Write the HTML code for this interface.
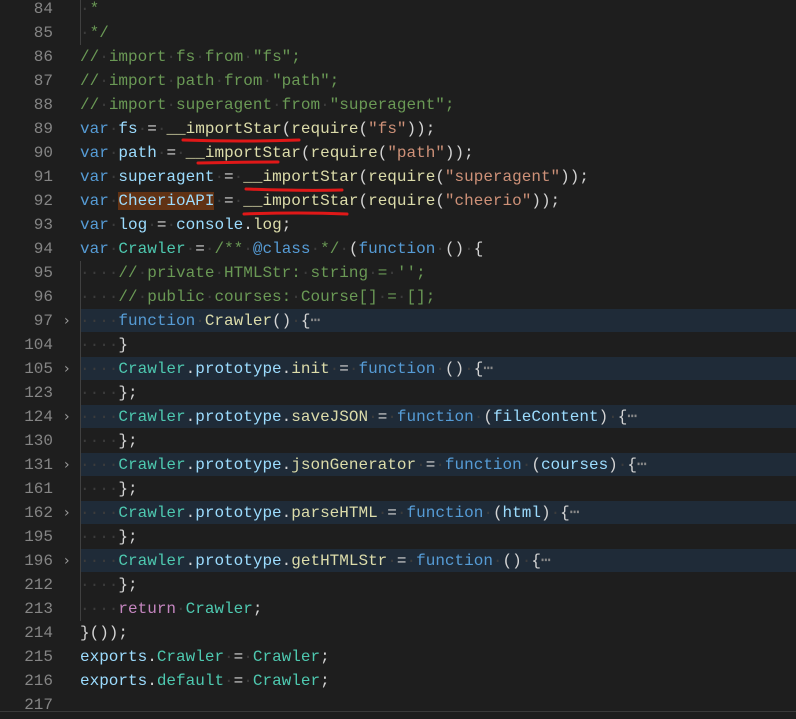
<!DOCTYPE html>
<html><head><meta charset="utf-8"><style>
html,body{margin:0;padding:0;background:#1e1e1e;width:796px;height:719px;overflow:hidden}
#ed{position:absolute;left:0;top:-3px;width:796px;font-family:"Liberation Mono","DejaVu Sans Mono",monospace;font-size:16px;color:#d4d4d4}
.l{position:relative;height:24px;line-height:24px;white-space:pre}
.n{position:absolute;left:0;width:53px;text-align:right;color:#858585}
.x{position:absolute;left:80px}
.h{position:absolute;left:80px;right:0;top:0;height:23px;background:#1f2b38}
.ch{position:absolute;left:64px;top:0;color:#9a9a9a;font-size:14px;font-family:"DejaVu Sans",sans-serif}
.k{color:#569cd6}.v{color:#9cdcfe}.f{color:#dcdcaa}.s{color:#ce9178}.c{color:#6a9955}.t{color:#4ec9b0}.r{color:#c586c0}.d{color:#3c3c3c}.g{color:#8a8a8a}
.hl{background:#613214}
.gd{position:absolute;top:0;width:1px;height:24px;background:#404040}
#bl{position:absolute;left:0;top:711px;width:796px;height:1px;background:#3a3a3a}
</style></head><body>
<div id="ed">
<div class="l"><span class="n">84</span><span class="gd" style="left:80px"></span><span class="x"><span class="d">·</span><span class="c">*</span></span></div>
<div class="l"><span class="n">85</span><span class="gd" style="left:80px"></span><span class="x"><span class="d">·</span><span class="c">*/</span></span></div>
<div class="l"><span class="n">86</span><span class="x c">//<span class="d">·</span>import<span class="d">·</span>fs<span class="d">·</span>from<span class="d">·</span>"fs";</span></div>
<div class="l"><span class="n">87</span><span class="x c">//<span class="d">·</span>import<span class="d">·</span>path<span class="d">·</span>from<span class="d">·</span>"path";</span></div>
<div class="l"><span class="n">88</span><span class="x c">//<span class="d">·</span>import<span class="d">·</span>superagent<span class="d">·</span>from<span class="d">·</span>"superagent";</span></div>
<div class="l"><span class="n">89</span><span class="x"><span class="k">var</span><span class="d">·</span><span class="v">fs</span><span class="d">·</span>=<span class="d">·</span><span class="f">__importStar</span>(<span class="f">require</span>(<span class="s">"fs"</span>));</span></div>
<div class="l"><span class="n">90</span><span class="x"><span class="k">var</span><span class="d">·</span><span class="v">path</span><span class="d">·</span>=<span class="d">·</span><span class="f">__importStar</span>(<span class="f">require</span>(<span class="s">"path"</span>));</span></div>
<div class="l"><span class="n">91</span><span class="x"><span class="k">var</span><span class="d">·</span><span class="v">superagent</span><span class="d">·</span>=<span class="d">·</span><span class="f">__importStar</span>(<span class="f">require</span>(<span class="s">"superagent"</span>));</span></div>
<div class="l"><span class="n">92</span><span class="x"><span class="k">var</span><span class="d">·</span><span class="v hl">CheerioAPI</span><span class="d">·</span>=<span class="d">·</span><span class="f">__importStar</span>(<span class="f">require</span>(<span class="s">"cheerio"</span>));</span></div>
<div class="l"><span class="n">93</span><span class="x"><span class="k">var</span><span class="d">·</span><span class="v">log</span><span class="d">·</span>=<span class="d">·</span><span class="v">console</span>.<span class="f">log</span>;</span></div>
<div class="l"><span class="n">94</span><span class="x"><span class="k">var</span><span class="d">·</span><span class="t">Crawler</span><span class="d">·</span>=<span class="d">·</span><span class="c">/**<span class="d">·</span></span><span class="k">@class</span><span class="d">·</span><span class="c">*/</span><span class="d">·</span>(<span class="k">function</span><span class="d">·</span>()<span class="d">·</span>{</span></div>
<div class="l"><span class="n">95</span><span class="gd" style="left:80px"></span><span class="x"><span class="d">····</span><span class="c">//<span class="d">·</span>private<span class="d">·</span>HTMLStr:<span class="d">·</span>string<span class="d">·</span>=<span class="d">·</span>'';</span></span></div>
<div class="l"><span class="n">96</span><span class="gd" style="left:80px"></span><span class="x"><span class="d">····</span><span class="c">//<span class="d">·</span>public<span class="d">·</span>courses:<span class="d">·</span>Course[]<span class="d">·</span>=<span class="d">·</span>[];</span></span></div>
<div class="l"><span class="h"></span><span class="n">97</span><span class="ch">›</span><span class="gd" style="left:80px"></span><span class="x"><span class="d">····</span><span class="k">function</span><span class="d">·</span><span class="f">Crawler</span>()<span class="d">·</span>{<span class="g">⋯</span></span></div>
<div class="l"><span class="n">104</span><span class="gd" style="left:80px"></span><span class="x"><span class="d">····</span>}</span></div>
<div class="l"><span class="h"></span><span class="n">105</span><span class="ch">›</span><span class="gd" style="left:80px"></span><span class="x"><span class="d">····</span><span class="t">Crawler</span>.<span class="v">prototype</span>.<span class="f">init</span><span class="d">·</span>=<span class="d">·</span><span class="k">function</span><span class="d">·</span>()<span class="d">·</span>{<span class="g">⋯</span></span></div>
<div class="l"><span class="n">123</span><span class="gd" style="left:80px"></span><span class="x"><span class="d">····</span>};</span></div>
<div class="l"><span class="h"></span><span class="n">124</span><span class="ch">›</span><span class="gd" style="left:80px"></span><span class="x"><span class="d">····</span><span class="t">Crawler</span>.<span class="v">prototype</span>.<span class="f">saveJSON</span><span class="d">·</span>=<span class="d">·</span><span class="k">function</span><span class="d">·</span>(<span class="v">fileContent</span>)<span class="d">·</span>{<span class="g">⋯</span></span></div>
<div class="l"><span class="n">130</span><span class="gd" style="left:80px"></span><span class="x"><span class="d">····</span>};</span></div>
<div class="l"><span class="h"></span><span class="n">131</span><span class="ch">›</span><span class="gd" style="left:80px"></span><span class="x"><span class="d">····</span><span class="t">Crawler</span>.<span class="v">prototype</span>.<span class="f">jsonGenerator</span><span class="d">·</span>=<span class="d">·</span><span class="k">function</span><span class="d">·</span>(<span class="v">courses</span>)<span class="d">·</span>{<span class="g">⋯</span></span></div>
<div class="l"><span class="n">161</span><span class="gd" style="left:80px"></span><span class="x"><span class="d">····</span>};</span></div>
<div class="l"><span class="h"></span><span class="n">162</span><span class="ch">›</span><span class="gd" style="left:80px"></span><span class="x"><span class="d">····</span><span class="t">Crawler</span>.<span class="v">prototype</span>.<span class="f">parseHTML</span><span class="d">·</span>=<span class="d">·</span><span class="k">function</span><span class="d">·</span>(<span class="v">html</span>)<span class="d">·</span>{<span class="g">⋯</span></span></div>
<div class="l"><span class="n">195</span><span class="gd" style="left:80px"></span><span class="x"><span class="d">····</span>};</span></div>
<div class="l"><span class="h"></span><span class="n">196</span><span class="ch">›</span><span class="gd" style="left:80px"></span><span class="x"><span class="d">····</span><span class="t">Crawler</span>.<span class="v">prototype</span>.<span class="f">getHTMLStr</span><span class="d">·</span>=<span class="d">·</span><span class="k">function</span><span class="d">·</span>()<span class="d">·</span>{<span class="g">⋯</span></span></div>
<div class="l"><span class="n">212</span><span class="gd" style="left:80px"></span><span class="x"><span class="d">····</span>};</span></div>
<div class="l"><span class="n">213</span><span class="gd" style="left:80px"></span><span class="x"><span class="d">····</span><span class="r">return</span><span class="d">·</span><span class="t">Crawler</span>;</span></div>
<div class="l"><span class="n">214</span><span class="x">}());</span></div>
<div class="l"><span class="n">215</span><span class="x"><span class="v">exports</span>.<span class="t">Crawler</span><span class="d">·</span>=<span class="d">·</span><span class="t">Crawler</span>;</span></div>
<div class="l"><span class="n">216</span><span class="x"><span class="v">exports</span>.<span class="t">default</span><span class="d">·</span>=<span class="d">·</span><span class="t">Crawler</span>;</span></div>
<div class="l"><span class="n">217</span></div>
</div>
<div id="bl"></div>
<svg style="position:absolute;left:0;top:0" width="796" height="719">
<g stroke="#e01818" stroke-width="3" fill="none" stroke-linecap="round">
<path d="M183 140 Q240 142 299 140"/>
<path d="M198 163 Q240 162 278 162"/>
<path d="M246 189 Q300 191 342 190"/>
<path d="M244 214 Q300 212 347 214"/>
</g>
</svg>
</body></html>
